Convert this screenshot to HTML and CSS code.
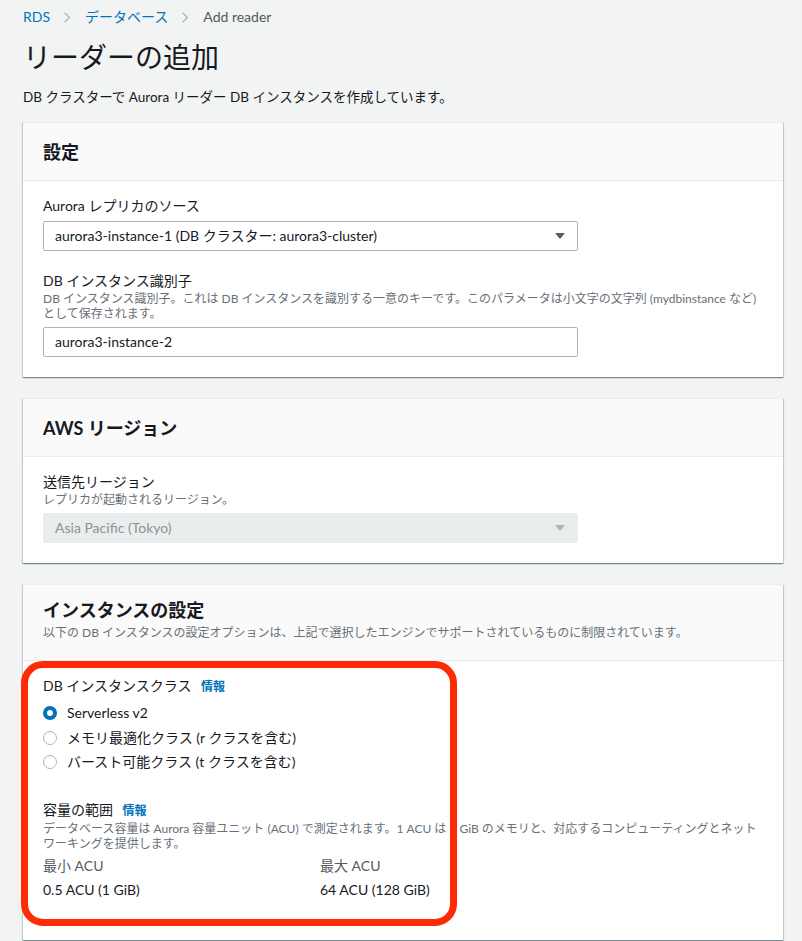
FILE: index.html
```html
<!DOCTYPE html>
<html lang="ja">
<head>
<meta charset="utf-8">
<title>リーダーの追加</title>
<link rel="stylesheet" href="styles.css">
</head>
<body>
<div class="page">
  <nav class="crumbs">
    <a class="crumb-link">RDS</a>
    <svg class="chev" viewBox="0 0 10 16" width="8" height="13"><path d="M2 2l6 6-6 6" fill="none" stroke="#aab7b8" stroke-width="1.6"/></svg>
    <a class="crumb-link">データベース</a>
    <svg class="chev" viewBox="0 0 10 16" width="8" height="13"><path d="M2 2l6 6-6 6" fill="none" stroke="#aab7b8" stroke-width="1.6"/></svg>
    <span class="crumb-current">Add reader</span>
  </nav>
  <h1 class="title">リーダーの追加</h1>
  <p class="subtitle">DB クラスターで Aurora リーダー DB インスタンスを作成しています。</p>

  <section class="card">
    <header class="card-head"><h2>設定</h2></header>
    <div class="card-body">
      <div class="field">
        <div class="label">Aurora レプリカのソース</div>
        <div class="select">
          <span>aurora3-instance-1 (DB クラスター: aurora3-cluster)</span>
          <svg class="caret" viewBox="0 0 10 6" width="10" height="6"><path d="M0 0h10L5 6z" fill="#545b64"/></svg>
        </div>
      </div>
      <div class="field">
        <div class="label">DB インスタンス識別子</div>
        <div class="desc">DB インスタンス識別子。これは DB インスタンスを識別する一意のキーです。このパラメータは小文字の文字列 (mydbinstance など)<br>として保存されます。</div>
        <div class="input">aurora3-instance-2</div>
      </div>
    </div>
  </section>

  <section class="card">
    <header class="card-head"><h2>AWS リージョン</h2></header>
    <div class="card-body">
      <div class="field">
        <div class="label">送信先リージョン</div>
        <div class="desc">レプリカが起動されるリージョン。</div>
        <div class="select disabled">
          <span>Asia Pacific (Tokyo)</span>
          <svg class="caret" viewBox="0 0 10 6" width="10" height="6"><path d="M0 0h10L5 6z" fill="#aab7b8"/></svg>
        </div>
      </div>
    </div>
  </section>

  <section class="card">
    <header class="card-head with-desc">
      <h2>インスタンスの設定</h2>
      <div class="head-desc">以下の DB インスタンスの設定オプションは、上記で選択したエンジンでサポートされているものに制限されています。</div>
    </header>
    <div class="card-body marked">
      <div class="label">DB インスタンスクラス <a class="info">情報</a></div>
      <div class="radios">
        <div class="radio-row"><span class="radio checked"></span>Serverless v2</div>
        <div class="radio-row"><span class="radio"></span>メモリ最適化クラス (r クラスを含む)</div>
        <div class="radio-row"><span class="radio"></span>バースト可能クラス (t クラスを含む)</div>
      </div>
      <div class="field capacity">
        <div class="label">容量の範囲 <a class="info">情報</a></div>
        <div class="desc">データベース容量は Aurora 容量ユニット (ACU) で測定されます。1 ACU は 2 GiB のメモリと、対応するコンピューティングとネット<br>ワーキングを提供します。</div>
        <div class="acu-grid">
          <div class="acu-label">最小 ACU</div>
          <div class="acu-label">最大 ACU</div>
          <div class="acu-value">0.5 ACU (1 GiB)</div>
          <div class="acu-value">64 ACU (128 GiB)</div>
        </div>
      </div>
      <div class="highlight"></div>
    </div>
  </section>
</div>
</body>
</html>
```

FILE: styles.css
```css
* { box-sizing: border-box; }
html, body { margin: 0; padding: 0; }
body {
  background: #f2f3f3;
  font-family: "Lato", "Noto Sans CJK JP", sans-serif;
  color: #16191f;
  font-size: 14px;
  line-height: 20px;
  overflow: hidden;
  height: 941px;
}
.page {
  padding: 7px 19px 0 23px;
}
.crumbs {
  display: flex;
  align-items: center;
  height: 20px;
  font-size: 14px;
}
.crumb-link { color: #0073bb; }
.crumb-current { color: #545b64; }
.chev { margin: 0 14px 0 13px; }
.title {
  margin: 12px 0 0;
  font-size: 28px;
  line-height: 36px;
  font-weight: 400;
  color: #16191f;
}
.subtitle {
  margin: 12px 0 0;
  font-size: 13.5px;
  line-height: 20px;
  color: #16191f;
}
.card {
  background: #fff;
  border-top: 1px solid #eaeded;
  box-shadow: 0 1px 1px 0 rgba(0,28,36,.3), 1px 1px 1px 0 rgba(0,28,36,.15), -1px 1px 1px 0 rgba(0,28,36,.15);
  margin-top: 15px;
  margin-bottom: 21px;
}
.card + .card { margin-top: 0; }
.card-head {
  background: #fafafa;
  border-bottom: 1px solid #eaeded;
  padding: 19px 20px 18px;
}
.card-head h2 {
  margin: 0;
  font-size: 18px;
  line-height: 20px;
  font-weight: 700;
}
.card-head.with-desc { padding: 15px 20px 19px; }
.head-desc {
  margin-top: 5px;
  font-size: 12px;
  line-height: 16px;
  color: #687078;
}
.card-body {
  padding: 15px 20px 20px;
}
.field + .field { margin-top: 20px; }
.label {
  font-size: 14px;
  line-height: 20px;
  color: #16191f;
}
.desc {
  font-size: 12px;
  line-height: 15px;
  color: #687078;
}
.select, .input {
  margin-top: 5px;
  width: 535px;
  height: 30px;
  border: 1px solid #aab7b8;
  border-radius: 2px;
  padding: 0 12px 0 11px;
  display: flex;
  align-items: center;
  justify-content: space-between;
  font-size: 14px;
}
.input { margin-top: 6px; }
.desc + .select { margin-top: 6px; }
.select.disabled {
  background: #eaeded;
  border-color: #eaeded;
  color: #879596;
}
.info {
  color: #0073bb;
  font-size: 12px;
  font-weight: 700;
  margin-left: 6px;
}
.marked { position: relative; padding-bottom: 40px; }
.radios { margin-top: 4px; }
.radio-row {
  display: flex;
  align-items: center;
  height: 24.5px;
}
.radio {
  width: 14px;
  height: 14px;
  border-radius: 50%;
  border: 1px solid #aab7b8;
  margin-right: 10px;
  flex: none;
}
.radio.checked {
  border: 4px solid #0073bb;
  background: #fff;
}
.capacity { margin-top: 25px; }
.acu-grid {
  display: grid;
  grid-template-columns: 277px 1fr;
  row-gap: 4px;
  margin-top: 5px;
}
.acu-label { color: #545b64; font-size: 14px; line-height: 20px; }
.acu-value { font-size: 14px; line-height: 20px; }
.highlight {
  position: absolute;
  left: -2px;
  top: 0;
  width: 436px;
  height: 265px;
  border: 7px solid #ff2b06;
  border-radius: 22px;
  pointer-events: none;
}
```
